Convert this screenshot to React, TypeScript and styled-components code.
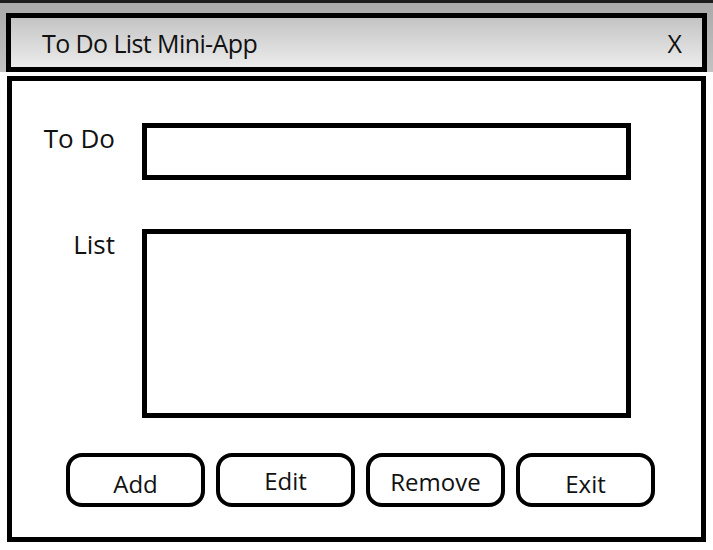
import React from 'react';
import styled, { createGlobalStyle } from 'styled-components';

const GlobalStyle = createGlobalStyle`
  html, body {
    margin: 0;
    padding: 0;
    background: #fff;
  }
  body {
    font-family: "Open Sans", "Noto Sans", "Liberation Sans", sans-serif;
    color: #111;
  }
`

const Page = styled.div`
  width: 713px;
  height: 550px;
  overflow: hidden;
  background: linear-gradient(#a9a9a9 0px, #c2c2c2 72px, #fdfdfd 72px, #fff 100%);
`

const Chrome = styled.div`
  height: 3px;
  background: #1c1c1c;
`

const TitleArea = styled.div`
  padding: 10px 6px 4px 6px;
`

const TitleBar = styled.div`
  height: 49px;
  border: 5px solid #000;
  display: flex;
  align-items: center;
  justify-content: space-between;
  padding: 0 20px 0 31px;
  background: linear-gradient(#c4c4c4, #ececec);
`

const Title = styled.span`
  font-size: 25px;
  letter-spacing: -0.6px;
  color: #111;
`

const Close = styled.span`
  font-size: 25px;
  color: #111;
`

const Panel = styled.div`
  margin: 0 7px;
  height: 456px;
  border: 5px solid #000;
  background: #fff;
  display: flex;
  flex-direction: column;
`

const Form = styled.div`
  display: grid;
  grid-template-columns: 103px 489px;
  column-gap: 27px;
  row-gap: 49px;
  padding-top: 42px;
`

const Label = styled.div`
  font-size: 26px;
  line-height: 30px;
  text-align: right;
  align-self: start;
`

const Box = styled.div<{ tall?: boolean }>`
  height: ${p => p.tall ? 179 : 47}px;
  border: 5px solid #000;
  background: #fff;
`

const Buttons = styled.div`
  display: flex;
  gap: 11px;
  padding: 35px 0 0 54px;
`

const Button = styled.div<{ drop: number }>`
  box-sizing: border-box;
  width: 139px;
  height: 54px;
  border: 4px solid #000;
  border-radius: 16px;
  display: flex;
  align-items: center;
  justify-content: center;
  padding-top: ${p => p.drop}px;
  font-size: 24px;
  color: #111;
`

const buttons = [
  { label: 'Add', drop: 6 },
  { label: 'Edit', drop: 0 },
  { label: 'Remove', drop: 3 },
  { label: 'Exit', drop: 6 },
]

export default function App() {
  return <Page>
    <GlobalStyle />
    <Chrome />
    <TitleArea>
      <TitleBar>
        <Title>To Do List Mini-App</Title>
        <Close>X</Close>
      </TitleBar>
    </TitleArea>
    <Panel>
      <Form>
        <Label>To Do</Label>
        <Box />
        <Label>List</Label>
        <Box tall />
      </Form>
      <Buttons>
        {buttons.map(b => <Button key={b.label} drop={b.drop}>{b.label}</Button>)}
      </Buttons>
    </Panel>
  </Page>;
}
